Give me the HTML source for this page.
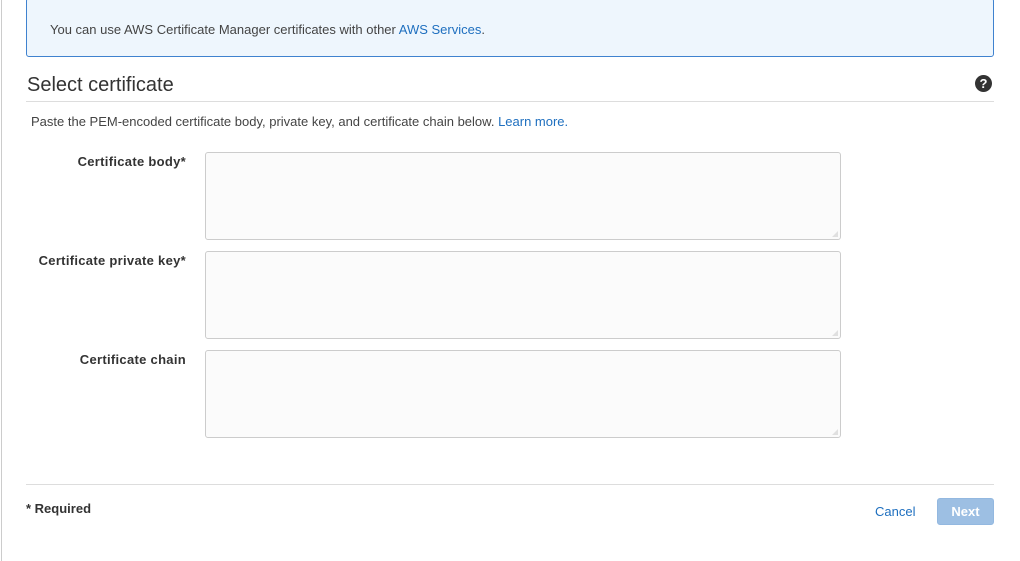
<!DOCTYPE html>
<html><head><meta charset="utf-8"><style>
*{box-sizing:border-box;margin:0;padding:0}
body{width:1020px;height:561px;background:#fff;font-family:"Liberation Sans",Arial,sans-serif;color:#444;position:relative;overflow:hidden}
.lb{position:absolute;left:1px;top:0;width:1px;height:561px;background:#ccc}
.info{position:absolute;left:26px;top:-2px;width:968px;height:59px;background:#eef6fd;border:1px solid #3f82cf;border-radius:3px;font-size:13px;padding:23px 0 0 23px;color:#444}
a{color:#1e6fbf;text-decoration:none}
h2{position:absolute;left:27px;top:74px;font-size:20px;font-weight:normal;color:#333}
.hl{position:absolute;left:26px;width:968px;height:1px;background:#ddd}
.help{position:absolute;left:975px;top:75px;width:17px;height:17px;border-radius:50%;background:#333;color:#fff;font-weight:bold;font-size:13px;text-align:center;line-height:17px}
.p{position:absolute;left:31px;top:114px;font-size:13px}
.lab{position:absolute;right:834px;font-size:13px;font-weight:bold;color:#333;text-align:right;white-space:nowrap;letter-spacing:0.3px}
.ta{position:absolute;left:205px;width:636px;height:88px;border:1px solid #ccc;border-radius:3px;background:#fbfbfb}
.ta:after{content:"";position:absolute;right:2px;bottom:2px;width:6px;height:6px;background:radial-gradient(circle,#999 0.6px,transparent 0.8px) 0 0/2px 2px;clip-path:polygon(100% 0,100% 100%,0 100%)}
.req{position:absolute;left:26px;top:501px;font-size:13px;font-weight:bold;color:#333}
.cancel{position:absolute;left:875px;top:504px;font-size:13px;color:#1e6fbf}
.next{position:absolute;left:937px;top:498px;width:57px;height:27px;border-radius:3px;background:#9dbfe3;border:1px solid #93b8e0;color:#fff;font-weight:bold;font-size:13px;text-align:center;line-height:26px}
</style></head><body>
<div class="lb"></div>
<div class="info">You can use AWS Certificate Manager certificates with other <a>AWS Services</a>.</div>
<h2>Select certificate</h2>
<div class="help">?</div>
<div class="hl" style="top:101px"></div>
<div class="p">Paste the PEM-encoded certificate body, private key, and certificate chain below. <a>Learn more.</a></div>
<div class="lab" style="top:154px">Certificate body*</div>
<div class="ta" style="top:152px"></div>
<div class="lab" style="top:253px">Certificate private key*</div>
<div class="ta" style="top:251px"></div>
<div class="lab" style="top:352px">Certificate chain</div>
<div class="ta" style="top:350px"></div>
<div class="hl" style="top:484px"></div>
<div class="req">* Required</div>
<div class="cancel">Cancel</div>
<div class="next">Next</div>
</body></html>
